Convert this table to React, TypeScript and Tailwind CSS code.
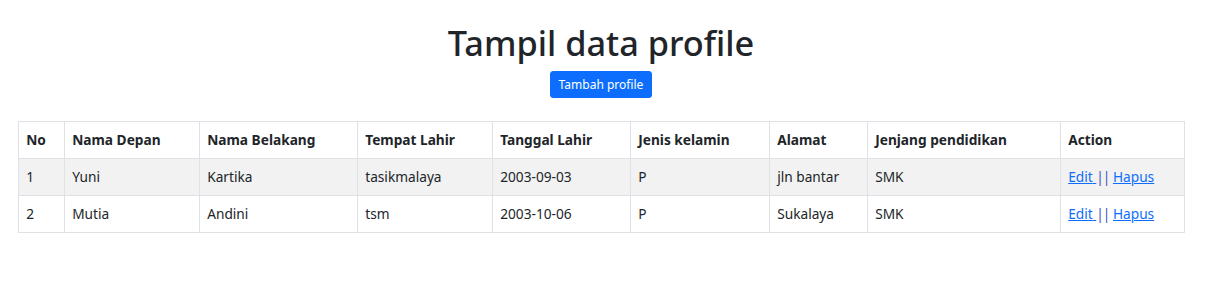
export default function App() {
  const rows = [
    ["1", "Yuni", "Kartika", "tasikmalaya", "2003-09-03", "P", "jln bantar", "SMK"],
    ["2", "Mutia", "Andini", "tsm", "2003-10-06", "P", "Sukalaya", "SMK"],
  ]
  const heads = [
    "No",
    "Nama Depan",
    "Nama Belakang",
    "Tempat Lahir",
    "Tanggal Lahir",
    "Jenis kelamin",
    "Alamat",
    "Jenjang pendidikan",
    "Action",
  ]
  const widths = [46, 135, 158, 135, 138, 139, 98, 193, 124]

  return (
    <div
      className="min-h-screen bg-white text-[#212529] text-[13.7px] leading-[21.6px]"
      style={{ fontFamily: '"Noto Sans", "Open Sans", sans-serif' }}
    >
      <div className="pt-[21px] pl-[18px] pr-[21px]">
        <h1 className="text-center text-[34.3px] leading-[43.2px] font-medium mb-[7px]">Tampil data profile</h1>
        <div className="flex justify-center">
          <button className="bg-[#0d6efd] text-white text-[12px] leading-[19px] px-[8px] py-[3px] rounded-[3px] border border-[#0d6efd]">
            Tambah profile
          </button>
        </div>
        <table className="mt-[23px] w-[1166px] table-fixed border-collapse">
          <colgroup>
            {widths.map((w, i) => (
              <col key={i} style={{ width: w }} />
            ))}
          </colgroup>
          <thead>
            <tr>
              {heads.map((h) => (
                <th key={h} className="border border-[#dee2e6] px-[7.2px] py-[7.2px] text-left font-bold">
                  {h}
                </th>
              ))}
            </tr>
          </thead>
          <tbody>
            {rows.map((r, i) => (
              <tr key={i} className={i % 2 === 0 ? "bg-[#f2f2f2]" : "bg-white"}>
                {r.map((c, j) => (
                  <td key={j} className="border border-[#dee2e6] px-[7.2px] py-[7.2px]">
                    {c}
                  </td>
                ))}
                <td className="border border-[#dee2e6] px-[7.2px] py-[7.2px]">
                  <a href="#" className="text-[#0d6efd] underline">
                    Edit{" "}
                  </a>
                  <span className="text-[#3d4fc4] tracking-[-1px]">||</span>{" "}
                  <a href="#" className="text-[#0d6efd] underline">
                    Hapus
                  </a>
                </td>
              </tr>
            ))}
          </tbody>
        </table>
      </div>
    </div>
  )
}
